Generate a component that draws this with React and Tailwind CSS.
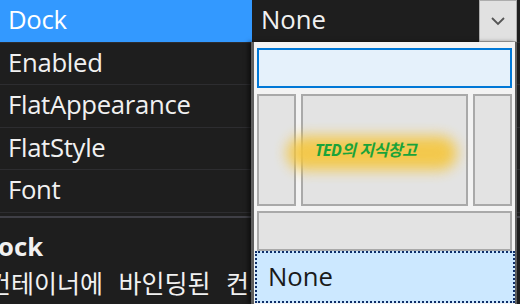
const rows = ['Dock', 'Enabled', 'FlatAppearance', 'FlatStyle', 'Font']

function Chevron() {
  return (
    <svg width="16" height="10" viewBox="0 0 16 10" fill="none">
      <path d="M2 2 L8 8 L14 2" stroke="#555" strokeWidth="1.8" />
    </svg>
  )
}

export default function App() {
  return (
    <div className="relative w-[520px] h-[304px] overflow-hidden bg-[#1e1e1e] text-[#f1f1f1] font-['Open_Sans','Noto_Sans_CJK_KR',sans-serif]">
      {/* Property rows */}
      <div className="flex flex-col">
        {rows.map((name, i) => (
          <div key={name} className="flex h-[42.5px] border-b border-[#2d2d30]">
            <div
              className={`w-[251px] pl-2 flex items-center text-[25.7px] tracking-[-0.3px] ${
                i === 0 ? 'bg-[#3399ff] text-white' : ''
              }`}
            >
              {name}
            </div>
            <div className={`flex-1 flex items-center border-l ${i === 0 ? 'border-[#3399ff]' : 'border-[#2d2d30]'}`}>
              {i === 0 && (
                <>
                  <span className="pl-[9px] text-[25.7px] flex-1">None</span>
                  <div className="w-[38px] h-[42px] mr-[3px] bg-[#e1e1e1] border border-[#adadad] flex items-center justify-center">
                    <Chevron />
                  </div>
                </>
              )}
            </div>
          </div>
        ))}
      </div>

      {/* Description */}
      <div className="border-t-2 border-[#3f3f46] mt-[3px] pt-[14px]">
        <div className="ml-[-21px] text-[25.7px] font-bold leading-[30px]">Dock</div>
        <div className="ml-[-12px] mt-[6px] text-[25px] leading-[30px] whitespace-nowrap [word-spacing:9px]">
          컨테이너에 바인딩된 컨트롤의 테두리
        </div>
      </div>

      {/* Dock picker dropdown */}
      <div className="absolute left-[251px] top-[42px] w-[266px] bottom-0 bg-[#f3f3f3] border-l-[3px] border-r-2 border-[#5e5e5e] shadow-[-3px_0_4px_rgba(0,0,0,0.5)] flex flex-col px-[3px] pt-[6px] gap-[4px]">
        <div className="h-[40px] bg-[#e5f1fb] border-2 border-[#0078d7]" />
        <div className="h-[112px] flex gap-[5px] mt-[2px]">
          <div className="w-[39px] bg-[#e3e3e3] border-2 border-[#a9a9a9]" />
          <div className="flex-1 bg-[#e3e3e3] border-2 border-[#a9a9a9] relative flex items-center justify-center">
            <div className="absolute left-[-16px] top-[40px] w-[170px] h-[34px] rounded-full bg-[#f5c63c] blur-[7px] opacity-90" />
            <span className="relative text-[16px] font-bold italic text-[#1aa33a] tracking-[-0.5px] -ml-[38px]">
              TED의 지식창고
            </span>
          </div>
          <div className="w-[39px] bg-[#e3e3e3] border-2 border-[#a9a9a9]" />
        </div>
        <div className="h-[40px] bg-[#e3e3e3] border-2 border-[#a9a9a9] mt-[1px]" />
      </div>
      <div className="absolute left-[255px] top-[251px] w-[260px] h-[52px] bg-[#cce8ff] border-2 border-dotted border-[#0f2f6a] flex items-center pl-[11px] text-[25.7px] text-[#1a1a1a]">
        None
      </div>
    </div>
  )
}
